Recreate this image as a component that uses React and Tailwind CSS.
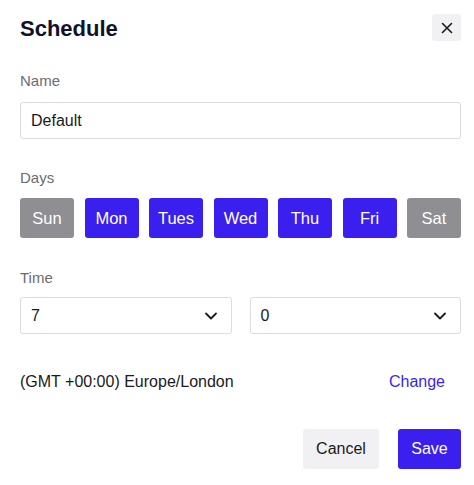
import React from "react";

const days = [
  { l: "Sun", on: false },
  { l: "Mon", on: true },
  { l: "Tues", on: true },
  { l: "Wed", on: true },
  { l: "Thu", on: true },
  { l: "Fri", on: true },
  { l: "Sat", on: false },
];

function Chevron() {
  return (
    <svg width="16" height="16" viewBox="0 0 16 16" fill="none">
      <path d="M3 5.5 L8 10.5 L13 5.5" stroke="#1a1a1a" strokeWidth="1.8" strokeLinecap="round" strokeLinejoin="round" />
    </svg>
  );
}

function Select({ value }) {
  return (
    <div className="flex h-[37px] flex-1 items-center justify-between rounded-[3px] border border-[#dcdcdf] bg-white pl-[10px] pr-[12px] text-[16px] text-[#1a1a1a]">
      <span>{value}</span>
      <Chevron />
    </div>
  );
}

export default function App() {
  return (
    <div
      className="h-[485px] w-[474px] bg-white pl-[20px] pr-[13px] pt-[14px] text-[#1a1a1a]"
      style={{ fontFamily: '"Liberation Sans", Arial, sans-serif' }}
    >
      <div className="flex items-start justify-between">
        <h1 className="mt-[1px] text-[22px] font-bold leading-[27px] text-[#12112b]">Schedule</h1>
        <button className="flex h-[27px] w-[29px] items-center justify-center rounded-[3px] bg-[#f1f1f3]">
          <svg width="12" height="12" viewBox="0 0 12 12">
            <path d="M1.5 1.5 L10.5 10.5 M10.5 1.5 L1.5 10.5" stroke="#1a1a1a" strokeWidth="1.6" strokeLinecap="round" />
          </svg>
        </button>
      </div>

      <div className="mt-[30px] text-[15px] leading-[18px] text-[#6b6b73]">Name</div>
      <div className="mt-[12px] flex h-[37px] items-center rounded-[3px] border border-[#dcdcdf] px-[10px] text-[16px]">
        Default
      </div>

      <div className="mt-[30px] text-[15px] leading-[18px] text-[#6b6b73]">Days</div>
      <div className="mt-[11px] grid grid-cols-7 gap-[10.5px]">
        {days.map((d) => (
          <div
            key={d.l}
            className={
              "flex h-[40px] items-center justify-center rounded-[3px] text-[16.5px] text-white " +
              (d.on ? "bg-[#3a1fee]" : "bg-[#8e8e93]")
            }
          >
            {d.l}
          </div>
        ))}
      </div>

      <div className="mt-[31px] text-[15px] leading-[18px] text-[#6b6b73]">Time</div>
      <div className="mt-[10px] flex gap-[18px]">
        <Select value="7" />
        <Select value="0" />
      </div>

      <div className="mt-[38px] flex items-center justify-between pr-[16px] text-[16px] leading-[20px]">
        <span>(GMT +00:00) Europe/London</span>
        <span className="text-[#3a1fee]">Change</span>
      </div>

      <div className="mt-[37px] flex justify-end gap-[19px]">
        <button className="h-[40px] w-[76px] rounded-[3px] bg-[#f1f1f3] text-[16px] text-[#1a1a1a]">Cancel</button>
        <button className="h-[40px] w-[63px] rounded-[3px] bg-[#3a1fee] text-[16px] text-white">Save</button>
      </div>
    </div>
  );
}
